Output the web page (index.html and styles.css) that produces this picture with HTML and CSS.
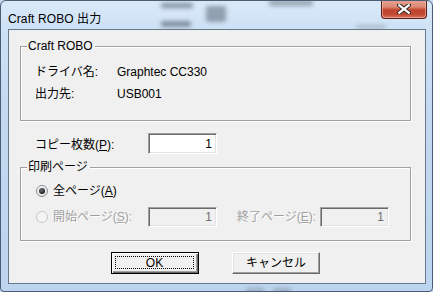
FILE: index.html
```html
<!DOCTYPE html>
<html lang="ja">
<head>
<meta charset="utf-8">
<link rel="stylesheet" href="styles.css">
</head>
<body>
<div class="window">
  <div class="blur b1"></div>
  <div class="blur b2"></div>
  <div class="blur b3"></div>
  <div class="blur b4"></div>
  <div class="blur b5"></div>
  <div class="blur b6"></div>
  <div class="blur b7"></div>
  <div class="titlebar">
    <span class="title">Craft ROBO 出力</span>
    <button class="close" aria-label="閉じる">
      <svg width="14" height="10" viewBox="0 0 14 10">
        <path d="M2 1 L12 9 M12 1 L2 9" stroke="#3a2a2a" stroke-width="4.2" stroke-linecap="square"/>
        <path d="M2.3 1.3 L11.7 8.7 M11.7 1.3 L2.3 8.7" stroke="#ffffff" stroke-width="2.2" stroke-linecap="square"/>
      </svg>
    </button>
  </div>
  <div class="client">
    <div class="group g1">
      <span class="legend">Craft ROBO</span>
      <div class="info-row"><span class="info-label">ドライバ名:</span><span>Graphtec CC330</span></div>
      <div class="info-row"><span class="info-label">出力先:</span><span>USB001</span></div>
    </div>
    <div class="copies">
      <span class="copies-label">コピー枚数(<u>P</u>):</span>
      <span class="edit">1</span>
    </div>
    <div class="group g2">
      <span class="legend">印刷ページ</span>
      <div class="radio-row">
        <span class="radio checked"></span>
        <span>全ページ(<u>A</u>)</span>
      </div>
      <div class="radio-row disabled">
        <span class="radio"></span>
        <span class="from-label">開始ページ(<u>S</u>):</span>
        <span class="edit edit-small">1</span>
        <span class="to-label">終了ページ(<u>E</u>):</span>
        <span class="edit edit-small">1</span>
      </div>
    </div>
    <div class="buttons">
      <button class="btn default"><span class="focus">OK</span></button>
      <button class="btn">キャンセル</button>
    </div>
  </div>
</div>
</body>
</html>
```
FILE: styles.css
```css
html, body {
  margin: 0;
  padding: 0;
  background: #c4dbf1;
}
body {
  width: 433px;
  height: 292px;
  overflow: hidden;
}
.window {
  position: relative;
  box-sizing: border-box;
  width: 433px;
  height: 292px;
  border: 1px solid #4a5d74;
  border-radius: 6px 6px 4px 4px;
  padding: 0 6px 7px 7px;
  background: linear-gradient(180deg, #d9e9f8 0px, #cde1f5 30px, #c3d9f0 120px, #bcd4ee 292px);
  overflow: hidden;
  font-family: "Liberation Sans", "Noto Sans CJK JP", sans-serif;
  font-size: 12px;
  color: #000;
}
.blur {
  position: absolute;
  background: #4f5a68;
  filter: blur(2px);
  opacity: 0.6;
  border-radius: 2px;
}
.b1 { left: 160px; top: 2px; width: 32px; height: 5px; }
.b2 { left: 160px; top: 20px; width: 30px; height: 6px; }
.b3 { left: 205px; top: 5px; width: 20px; height: 16px; opacity: 0.5; }
.b4 { left: 268px; top: -1px; width: 44px; height: 6px; opacity: 0.45; }
.b5 { left: 355px; top: 24px; width: 30px; height: 4px; opacity: 0.3; }
.b6 { left: 245px; top: 287px; width: 18px; height: 6px; opacity: 0.3; }
.b7 { left: 272px; top: 287px; width: 18px; height: 6px; opacity: 0.3; }
.titlebar {
  position: relative;
  height: 28px;
  display: flex;
  align-items: flex-start;
  justify-content: space-between;
}
.title {
  margin-top: 8px;
  font-size: 12px;
  color: #000;
  letter-spacing: 0.1px;
}
.close {
  box-sizing: border-box;
  width: 46px;
  height: 19px;
  margin: -1px -1px 0 0;
  padding: 0;
  border: 1px solid #5c1f16;
  border-top: none;
  border-radius: 0 0 4px 4px;
  background: linear-gradient(180deg, #e9a697 0%, #d98570 40%, #c0432b 55%, #c24a33 80%, #d8765d 100%);
  box-shadow: inset 0 0 0 1px rgba(255, 220, 210, 0.45);
  display: flex;
  align-items: center;
  justify-content: center;
}
.close svg { display: block; }
.client {
  position: relative;
  box-sizing: border-box;
  width: 418px;
  height: 255px;
  border: 1px solid #66788c;
  background: #f0f0f0;
  padding: 16px 0 0 11px;
  display: flex;
  flex-direction: column;
  align-items: flex-start;
}
.group {
  position: relative;
  box-sizing: border-box;
  width: 391px;
  border: 1px solid #a0a0a0;
  box-shadow: inset 1px 1px #fff, 1px 1px #fff;
  padding-left: 14px;
}
.legend {
  position: absolute;
  left: 6px;
  top: -8px;
  padding: 0 2px 0 1px;
  background: #f0f0f0;
  line-height: 14px;
}
.g1 {
  height: 75px;
  padding-top: 18px;
  display: flex;
  flex-direction: column;
  gap: 8px;
}
.info-row {
  display: flex;
  line-height: 14px;
  height: 14px;
}
.info-label {
  width: 82px;
}
.copies {
  margin-top: 12px;
  display: flex;
  align-items: center;
  padding-left: 15px;
}
.copies-label {
  width: 113px;
}
.edit {
  box-sizing: border-box;
  width: 69px;
  height: 21px;
  border: 1px solid;
  border-color: #a0a0a0 #fff #fff #a0a0a0;
  box-shadow: inset 1px 1px #696969, inset -1px -1px #e3e3e3;
  background: #fff;
  text-align: right;
  padding: 3px 4px 0 0;
  line-height: 14px;
}
.g2 {
  margin-top: 13px;
  height: 74px;
  padding-top: 16px;
  padding-left: 15px;
  display: flex;
  flex-direction: column;
  gap: 9px;
}
.radio-row {
  display: flex;
  align-items: center;
  height: 14px;
  line-height: 14px;
}
.radio-row.disabled {
  height: 20px;
  color: #a0a0a0;
  text-shadow: 1px 1px #fff;
}
.radio {
  box-sizing: border-box;
  width: 12px;
  height: 12px;
  border-radius: 50%;
  border: 1px solid #8b8e92;
  background: radial-gradient(circle at 40% 35%, #ffffff 0%, #f0f0f0 45%, #d4d6d8 100%);
  margin-right: 5px;
  position: relative;
}
.radio.checked::after {
  content: "";
  position: absolute;
  left: 2px;
  top: 2px;
  width: 6px;
  height: 6px;
  border-radius: 50%;
  background: radial-gradient(circle at 40% 35%, #6f7378 0%, #1b1d20 70%);
}
.disabled .radio {
  border-color: #c6c8ca;
  background: #f4f4f4;
}
.from-label {
  width: 95px;
}
.disabled .edit {
  background: #f0f0f0;
  color: #6d6d6d;
  text-shadow: none;
}
.edit-small {
  height: 20px;
  padding-top: 2px;
}
.to-label {
  margin-left: 20px;
  width: 83px;
}
.buttons {
  margin-top: 11px;
  padding-left: 91px;
  display: flex;
  gap: 33px;
}
.btn {
  box-sizing: border-box;
  width: 88px;
  height: 22px;
  padding: 0;
  margin: 0;
  font: inherit;
  color: #000;
  background: #f0f0f0;
  border: 1px solid;
  border-color: #fff #696969 #696969 #fff;
  box-shadow: inset -1px -1px #a0a0a0, inset 1px 1px #e3e3e3;
  display: flex;
  align-items: center;
  justify-content: center;
  line-height: 14px;
}
.btn.default {
  border: 1px solid #000;
  box-shadow: inset 1px 1px #fff, inset -1px -1px #696969, inset -2px -2px #a0a0a0;
  padding: 3px 4px 4px 3px;
}
.focus {
  box-sizing: border-box;
  width: 100%;
  height: 100%;
  border: 1px dotted #000;
  display: flex;
  align-items: center;
  justify-content: center;
}
u {
  text-decoration: underline;
  text-underline-offset: 1px;
}
```
